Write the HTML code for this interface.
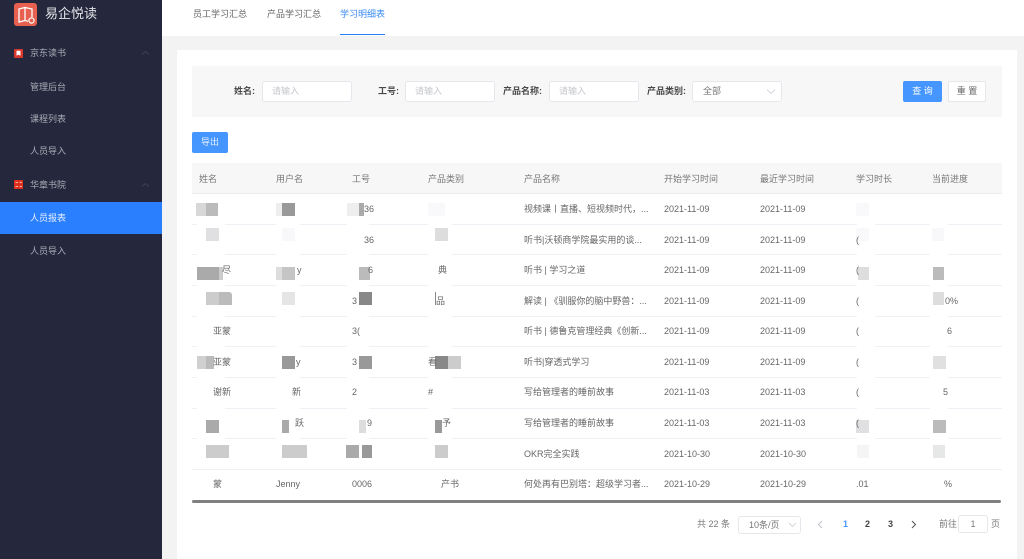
<!DOCTYPE html>
<html lang="zh"><head><meta charset="utf-8"><title>易企悦读</title>
<style>
html,body{margin:0;padding:0;width:1024px;height:559px;overflow:hidden;background:#f3f3f3}
body{position:relative;font-family:"Liberation Sans","Noto Sans CJK SC",sans-serif;font-size:9px;color:#666;filter:blur(.3px)}
div,span{position:absolute;white-space:nowrap;box-sizing:border-box}
.t{line-height:12px;height:12px}
.m{left:30px;color:#a9abb5}
.b{background:#fff;border:1px solid #e6e7ec;border-radius:3px;height:21px;top:81px;color:#c4c6cc;line-height:19px;padding-left:9px}
.l{top:85px;color:#4a4a4a;font-weight:bold}
.h{top:173px;color:#777}
.ln{left:192px;width:810px;height:1px;background:#f0f0f7}
.w{top:195px;height:274px;background:#fff}
.p{height:13px}
</style></head><body>
<div style="left:0;top:0;width:162px;height:559px;background:#25283d"></div>
<div style="left:162px;top:0;width:862px;height:36px;background:#fff"></div>
<div style="left:177px;top:50px;width:840px;height:509px;background:#fff"></div>

<svg style="position:absolute;left:14px;top:3px" width="23" height="23" viewBox="0 0 23 23"><rect width="23" height="23" rx="3" fill="#e8604f"/><path d="M5 6l6 -1.500v13l-6 1.500zM11 4.500l7 1.500v8M11 17.500l3 .7" fill="none" stroke="#fff" stroke-width="1.300"/><circle cx="17.500" cy="17.500" r="2.600" fill="#e8604f" stroke="#fff" stroke-width="1.200"/></svg>
<div class="t" style="left:45px;top:6px;height:16px;line-height:16px;font-size:13px;color:#e4e4e8">易企悦读</div>

<svg style="position:absolute;left:14px;top:49px" width="9" height="9"><rect width="9" height="9" rx="1" fill="#d9372c"/><path d="M2.500 1.800h4v5l-2-1-2 .8z" fill="#fff"/></svg>
<div class="t m" style="top:47px">京东读书</div>
<svg style="position:absolute;left:141px;top:50px" width="9" height="6"><path d="M1 4.500l3.500-3 3.500 3" fill="none" stroke="#3f4256"/></svg>
<div class="t m" style="top:81px">管理后台</div>
<div class="t m" style="top:113px">课程列表</div>
<div class="t m" style="top:145px">人员导入</div>
<svg style="position:absolute;left:14px;top:180px" width="9" height="9"><rect width="9" height="9" fill="#dc2f1f"/><path d="M1.500 2.500h2.500M5.500 2.500h2.500M1.500 6.500h2.500M5.500 6.500h2.500" stroke="#f3b0a0"/></svg>
<div class="t m" style="top:179px">华章书院</div>
<svg style="position:absolute;left:141px;top:182px" width="9" height="6"><path d="M1 4.500l3.500-3 3.500 3" fill="none" stroke="#3f4256"/></svg>
<div style="left:0;top:202px;width:162px;height:32px;background:#2a7fff"></div>
<div class="t m" style="top:212px;color:#e8f0ff">人员报表</div>
<div class="t m" style="top:245px">人员导入</div>

<div class="t" style="left:193px;top:8px;color:#666">员工学习汇总</div>
<div class="t" style="left:267px;top:8px;color:#666">产品学习汇总</div>
<div class="t" style="left:340px;top:8px;color:#3a8bf5">学习明细表</div>
<div style="left:340px;top:34px;width:45px;height:1px;background:#2a7fff"></div>

<div style="left:192px;top:66px;width:810px;height:51px;background:#f7f7f7"></div>
<div class="t l" style="left:234px">姓名:</div><div class="b" style="left:262px;width:90px">请输入</div>
<div class="t l" style="left:378px">工号:</div><div class="b" style="left:405px;width:90px">请输入</div>
<div class="t l" style="left:503px">产品名称:</div><div class="b" style="left:549px;width:90px">请输入</div>
<div class="t l" style="left:647px">产品类别:</div><div class="b" style="left:692px;width:90px;color:#777;padding-left:10px">全部</div>
<svg style="position:absolute;left:766px;top:88px" width="10" height="7"><path d="M1 1.500l4 4 4-4" fill="none" stroke="#d4d6dc"/></svg>
<div class="t" style="left:903px;top:81px;width:39px;height:21px;line-height:21px;background:#4596ff;border-radius:2px;color:#fff;text-align:center">查 询</div>
<div class="t" style="left:948px;top:81px;width:38px;height:21px;line-height:19px;background:#fff;border:1px solid #e6e7ec;border-radius:2px;color:#666;text-align:center">重 置</div>
<div class="t" style="left:192px;top:132px;width:36px;height:21px;line-height:21px;background:#4596ff;border-radius:2px;color:#e8f2ff;text-align:center">导出</div>

<div style="left:192px;top:163px;width:810px;height:31px;background:#f7f7f7;border-bottom:1px solid #ececef"></div>
<div class="t h" style="left:199px">姓名</div><div class="t h" style="left:276px">用户名</div><div class="t h" style="left:352px">工号</div><div class="t h" style="left:428px">产品类别</div><div class="t h" style="left:524px">产品名称</div><div class="t h" style="left:664px">开始学习时间</div><div class="t h" style="left:760px">最近学习时间</div><div class="t h" style="left:856px">学习时长</div><div class="t h" style="left:932px">当前进度</div>

<div class="ln" style="top:224px"></div><div class="ln" style="top:254px"></div><div class="ln" style="top:285px"></div><div class="ln" style="top:316px"></div><div class="ln" style="top:346px"></div><div class="ln" style="top:377px"></div><div class="ln" style="top:408px"></div><div class="ln" style="top:438px"></div><div class="ln" style="top:469px"></div>
<div class="w" style="left:197px;width:28px"></div><div class="w" style="left:276px;width:24px"></div><div class="w" style="left:347px;width:22px"></div><div class="w" style="left:428px;width:24px"></div><div class="w" style="left:857px;width:18px"></div><div class="w" style="left:930px;width:18px"></div>

<div class="p" style="left:196px;top:203px;width:10px;background:#d8d8d8"></div><div class="p" style="left:206px;top:203px;width:12px;background:#bbb"></div>
<div class="p" style="left:276px;top:203px;width:6px;background:#eee"></div><div class="p" style="left:282px;top:203px;width:13px;background:#999"></div>
<div class="p" style="left:347px;top:203px;width:12px;background:#eee"></div><div class="p" style="left:359px;top:203px;width:5px;background:#aaa"></div>
<div class="p" style="left:428px;top:203px;width:17px;background:#f9f9fb"></div><div class="p" style="left:856px;top:203px;width:13px;background:#f9f9fb"></div>
<div class="p" style="left:206px;top:228px;width:13px;background:#e0e0e2"></div><div class="p" style="left:282px;top:228px;width:13px;background:#f8f8fb"></div><div class="p" style="left:435px;top:228px;width:13px;background:#ddd"></div><div class="p" style="left:856px;top:228px;width:13px;background:#f9f9fb"></div><div class="p" style="left:932px;top:228px;width:12px;background:#f8f8fb"></div>
<div class="p" style="left:197px;top:267px;width:22px;background:#aaa"></div><div class="p" style="left:219px;top:267px;width:4px;background:#ccc"></div>
<div class="p" style="left:276px;top:267px;width:6px;background:#ddd"></div><div class="p" style="left:282px;top:267px;width:13px;background:#c5c5c5"></div>
<div class="p" style="left:359px;top:267px;width:11px;background:#bbb"></div><div class="p" style="left:858px;top:267px;width:11px;background:#ddd"></div><div class="p" style="left:933px;top:267px;width:11px;background:#bbb"></div>
<div class="p" style="left:206px;top:292px;width:13px;background:#ccc"></div><div class="p" style="left:219px;top:292px;width:13px;background:#bbb;border-radius:0 3px 0 0"></div>
<div class="p" style="left:282px;top:292px;width:13px;background:#e5e5e5"></div><div class="p" style="left:359px;top:292px;width:13px;background:#888"></div>
<div class="p" style="left:435px;top:292px;width:1px;background:#888"></div><div class="p" style="left:933px;top:292px;width:11px;background:#ddd"></div>
<div class="p" style="left:197px;top:356px;width:9px;background:#d0d0d0"></div><div class="p" style="left:206px;top:356px;width:8px;background:#bbb"></div>
<div class="p" style="left:282px;top:356px;width:13px;background:#999"></div><div class="p" style="left:359px;top:356px;width:13px;background:#999"></div>
<div class="p" style="left:435px;top:356px;width:13px;background:#888"></div><div class="p" style="left:448px;top:356px;width:13px;background:#ccc"></div><div class="p" style="left:933px;top:356px;width:13px;background:#e0e0e0"></div>
<div class="p" style="left:206px;top:420px;width:13px;background:#aaa"></div><div class="p" style="left:282px;top:420px;width:7px;background:#aaa"></div>
<div class="p" style="left:359px;top:420px;width:7px;background:#ddd"></div><div class="p" style="left:435px;top:420px;width:7px;background:#999"></div>
<div class="p" style="left:856px;top:420px;width:13px;background:#e0e0e2"></div><div class="p" style="left:933px;top:420px;width:13px;background:#bbb"></div>
<div class="p" style="left:206px;top:445px;width:23px;background:#ccc"></div><div class="p" style="left:282px;top:445px;width:25px;background:#ccc"></div>
<div class="p" style="left:346px;top:445px;width:13px;background:#aaa"></div><div class="p" style="left:362px;top:445px;width:10px;background:#999"></div>
<div class="p" style="left:435px;top:445px;width:13px;background:#ccc"></div><div class="p" style="left:857px;top:445px;width:12px;background:#f5f5f5"></div><div class="p" style="left:933px;top:445px;width:12px;background:#e6e8e8"></div>

<div class="t" style="left:364px;top:203px">36</div><div class="t" style="left:364px;top:234px">36</div><div class="t" style="left:222px;top:264px">尽</div><div class="t" style="left:297px;top:264px">y</div><div class="t" style="left:368px;top:264px">6</div><div class="t" style="left:438px;top:264px">典</div>
<div class="t" style="left:352px;top:295px">3</div><div class="t" style="left:436px;top:295px">品</div><div class="t" style="left:945px;top:295px">0%</div>
<div class="t" style="left:213px;top:325px">亚蒙</div><div class="t" style="left:352px;top:325px">3(</div><div class="t" style="left:947px;top:325px">6</div>
<div class="t" style="left:213px;top:356px">亚蒙</div><div class="t" style="left:296px;top:356px">y</div><div class="t" style="left:352px;top:356px">3</div><div class="t" style="left:428px;top:356px">看</div>
<div class="t" style="left:213px;top:386px">谢新</div><div class="t" style="left:292px;top:386px">新</div><div class="t" style="left:352px;top:386px">2</div><div class="t" style="left:428px;top:386px">#</div><div class="t" style="left:943px;top:386px">5</div>
<div class="t" style="left:295px;top:417px">跃</div><div class="t" style="left:367px;top:417px">9</div><div class="t" style="left:442px;top:417px">予</div>
<div class="t" style="left:213px;top:478px">蒙</div><div class="t" style="left:276px;top:478px">Jenny</div><div class="t" style="left:352px;top:478px">0006</div><div class="t" style="left:441px;top:478px">产书</div><div class="t" style="left:856px;top:478px">.01</div><div class="t" style="left:944px;top:478px">%</div>
<div class="t" style="left:856px;top:234px">(</div><div class="t" style="left:856px;top:264px">(</div><div class="t" style="left:856px;top:295px">(</div><div class="t" style="left:856px;top:325px">(</div><div class="t" style="left:856px;top:356px">(</div><div class="t" style="left:856px;top:386px">(</div><div class="t" style="left:856px;top:417px">(</div>

<div class="t" style="left:524px;top:203px">视频课丨直播、短视频时代，...</div><div class="t" style="left:664px;top:203px">2021-11-09</div><div class="t" style="left:760px;top:203px">2021-11-09</div>
<div class="t" style="left:524px;top:234px">听书|沃顿商学院最实用的谈...</div><div class="t" style="left:664px;top:234px">2021-11-09</div><div class="t" style="left:760px;top:234px">2021-11-09</div>
<div class="t" style="left:524px;top:264px">听书 | 学习之道</div><div class="t" style="left:664px;top:264px">2021-11-09</div><div class="t" style="left:760px;top:264px">2021-11-09</div>
<div class="t" style="left:524px;top:295px">解读 | 《驯服你的脑中野兽：...</div><div class="t" style="left:664px;top:295px">2021-11-09</div><div class="t" style="left:760px;top:295px">2021-11-09</div>
<div class="t" style="left:524px;top:325px">听书 | 德鲁克管理经典《创新...</div><div class="t" style="left:664px;top:325px">2021-11-09</div><div class="t" style="left:760px;top:325px">2021-11-09</div>
<div class="t" style="left:524px;top:356px">听书|穿透式学习</div><div class="t" style="left:664px;top:356px">2021-11-09</div><div class="t" style="left:760px;top:356px">2021-11-09</div>
<div class="t" style="left:524px;top:386px">写给管理者的睡前故事</div><div class="t" style="left:664px;top:386px">2021-11-03</div><div class="t" style="left:760px;top:386px">2021-11-03</div>
<div class="t" style="left:524px;top:417px">写给管理者的睡前故事</div><div class="t" style="left:664px;top:417px">2021-11-03</div><div class="t" style="left:760px;top:417px">2021-11-03</div>
<div class="t" style="left:524px;top:448px">OKR完全实践</div><div class="t" style="left:664px;top:448px">2021-10-30</div><div class="t" style="left:760px;top:448px">2021-10-30</div>
<div class="t" style="left:524px;top:478px">何处再有巴别塔：超级学习者...</div><div class="t" style="left:664px;top:478px">2021-10-29</div><div class="t" style="left:760px;top:478px">2021-10-29</div>

<div style="left:192px;top:500px;width:809px;height:3px;background:#808080;border-radius:2px"></div>

<div class="t" style="left:697px;top:518px;color:#777">共 22 条</div>
<div class="t" style="left:738px;top:516px;width:63px;height:18px;line-height:16px;background:#fff;border:1px solid #e6e7ec;border-radius:3px;padding-left:10px;color:#777">10条/页</div>
<svg style="position:absolute;left:788px;top:522px" width="9" height="6"><path d="M1 1l3.500 3.500 3.500-3.500" fill="none" stroke="#d4d6dc"/></svg>
<svg style="position:absolute;left:817px;top:520px" width="6" height="9"><path d="M5 1l-3.500 3.500 3.500 3.500" fill="none" stroke="#c0c2c8"/></svg>
<div class="t" style="left:843px;top:518px;color:#4596ff;font-weight:bold">1</div>
<div class="t" style="left:865px;top:518px;color:#444;font-weight:bold">2</div>
<div class="t" style="left:888px;top:518px;color:#444;font-weight:bold">3</div>
<svg style="position:absolute;left:911px;top:520px" width="6" height="9"><path d="M1 1l3.500 3.500-3.500 3.500" fill="none" stroke="#555"/></svg>
<div class="t" style="left:939px;top:518px;color:#777">前往</div>
<div class="t" style="left:958px;top:515px;width:30px;height:18px;line-height:16px;background:#fff;border:1px solid #e6e7ec;border-radius:3px;text-align:center;color:#777">1</div>
<div class="t" style="left:991px;top:518px;color:#777">页</div>
</body></html>
